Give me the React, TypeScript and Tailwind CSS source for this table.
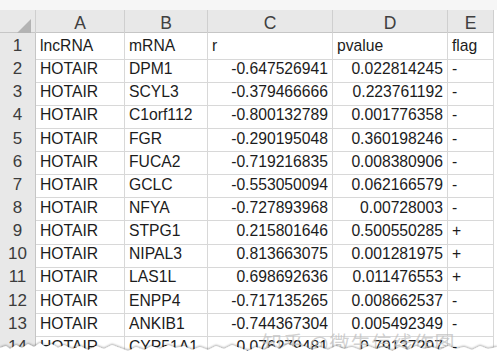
import React from 'react';

const rows = [
  ['lncRNA', 'mRNA', 'r', 'pvalue', 'flag'],
  ['HOTAIR', 'DPM1', '-0.647526941', '0.022814245', '-'],
  ['HOTAIR', 'SCYL3', '-0.379466666', '0.223761192', '-'],
  ['HOTAIR', 'C1orf112', '-0.800132789', '0.001776358', '-'],
  ['HOTAIR', 'FGR', '-0.290195048', '0.360198246', '-'],
  ['HOTAIR', 'FUCA2', '-0.719216835', '0.008380906', '-'],
  ['HOTAIR', 'GCLC', '-0.553050094', '0.062166579', '-'],
  ['HOTAIR', 'NFYA', '-0.727893968', '0.00728003', '-'],
  ['HOTAIR', 'STPG1', '0.215801646', '0.500550285', '+'],
  ['HOTAIR', 'NIPAL3', '0.813663075', '0.001281975', '+'],
  ['HOTAIR', 'LAS1L', '0.698692636', '0.011476553', '+'],
  ['HOTAIR', 'ENPP4', '-0.717135265', '0.008662537', '-'],
  ['HOTAIR', 'ANKIB1', '-0.744367304', '0.005492349', '-'],
  ['HOTAIR', 'CYP51A1', '-0.076279481', '0.79137297', '-'],
];

const cols = ['A', 'B', 'C', 'D', 'E'];
const gridCols = 'grid grid-cols-[36px_89px_83px_125px_115px_46px_3px]';

const App = () => {
  return (
    <div
      className="relative w-[497px] h-[362px] overflow-hidden bg-white text-[#1c1c1c]"
      style={{ fontFamily: '"Liberation Sans", "Noto Sans CJK SC", sans-serif' }}
    >
      <div className="h-[10px] bg-[#f6f6f6]" />

      {/* Column header */}
      <div className={`${gridCols} h-[23px] bg-[#e8e8e8] border-b border-[#c6c6c6]`}>
        <div className="flex items-end justify-end pr-[4px] pb-[3px] border-r border-[#cfcfcf]">
          <svg width="14" height="14" viewBox="0 0 14 14">
            <polygon points="14,0 14,14 0,14" fill="#b3b3b3" />
          </svg>
        </div>
        {cols.map((c) => (
          <div
            key={c}
            className="flex items-center justify-center text-[17.5px] text-[#404040] border-r border-[#cfcfcf]"
          >
            {c}
          </div>
        ))}
        <div className="bg-white" />
      </div>

      {/* Body */}
      {rows.map((r, i) => (
        <div key={i} className={`${gridCols} h-[23.15px] text-[15.7px]`}>
          <div className="flex items-center justify-center text-[17px] bg-[#e8e8e8] text-[#3c3c3c] border-r border-[#c6c6c6] border-b border-b-[#d6d6d6]">
            {i + 1}
          </div>
          <div className="flex items-center pl-[4px] border-r border-b border-[#d8d8d8]">{r[0]}</div>
          <div className="flex items-center pl-[4px] border-r border-b border-[#d8d8d8]">{r[1]}</div>
          <div
            className={`flex items-center border-r border-b border-[#d8d8d8] ${
              i === 0 ? 'pl-[4px]' : 'justify-end pr-[4px]'
            }`}
          >
            {r[2]}
          </div>
          <div
            className={`flex items-center border-r border-b border-[#d8d8d8] ${
              i === 0 ? 'pl-[4px]' : 'justify-end pr-[4px]'
            }`}
          >
            {r[3]}
          </div>
          <div className="flex items-center pl-[4px] border-r border-b border-[#d8d8d8]">{r[4]}</div>
          <div className="bg-white" />
        </div>
      ))}

      {/* watermark */}
      <div
        className="absolute left-[262px] top-[328px] text-[20px] text-[#bdbdbd]/70 tracking-[1px]"
        style={{ fontFamily: '"Noto Sans CJK SC", sans-serif' }}
      >
        知乎 @微生信线作图
      </div>

      {/* torn bottom edge */}
      <svg className="absolute left-0 bottom-0" width="497" height="24" viewBox="0 0 497 24">
        <defs>
          <filter id="sh" x="-5%" y="-50%" width="110%" height="200%">
            <feDropShadow dx="0" dy="-1" stdDeviation="1" floodColor="#000" floodOpacity="0.35" />
          </filter>
        </defs>
        <path
          filter="url(#sh)"
          fill="#ffffff"
          d="M0,24 L0,10 L6,8 L10,11 L16,7 L22,10 L28,6 L34,9 L40,5 L46,9 L52,6 L58,10 L64,7 L72,11 L80,8 L88,12 L96,8 L104,11 L112,7 L120,10 L128,13 L136,9 L144,12 L152,8 L160,11 L168,7 L176,10 L184,8 L192,12 L200,9 L208,12 L216,8 L224,11 L232,7 L240,10 L248,13 L256,9 L264,12 L272,8 L280,11 L288,6 L296,10 L304,8 L312,12 L320,9 L328,12 L336,8 L344,11 L352,9 L360,12 L368,8 L376,11 L384,9 L392,13 L400,9 L408,12 L416,8 L424,11 L432,9 L440,12 L448,8 L456,11 L464,9 L472,12 L480,8 L488,11 L497,9 L497,24 Z"
        />
      </svg>
    </div>
  );
};

export default App;
